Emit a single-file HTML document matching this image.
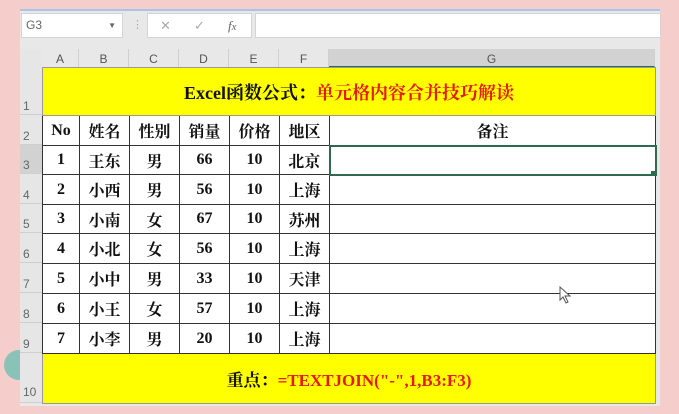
<!DOCTYPE html><html><head><meta charset="utf-8"><style>
body{margin:0;width:679px;height:414px;background:#f5cdca;position:relative;overflow:hidden;font-family:"Liberation Sans",sans-serif}
.win{position:absolute;left:20px;top:9px;width:640px;height:395px;background:#e8e8e8;border-top:2px solid #a9c4e8}
.a{position:absolute}
.box{background:#fff;border:1px solid #d4d4d4}
.ch{position:absolute;top:49px;height:18px;font-size:12px;color:#555;text-align:center;line-height:20px;border-right:1px solid #cfcfcf}
.rh{position:absolute;left:20px;width:22px;font-size:12px;color:#666;background:#e6e6e6;border-bottom:1px solid #cfcfcf;box-sizing:border-box;padding-left:3px}
table{position:absolute;left:42px;top:67px;border-collapse:collapse;table-layout:fixed;font-family:"Liberation Serif","Noto Serif CJK SC",serif;font-weight:bold;font-size:16px;color:#111}
td{border:1px solid #333;text-align:center;padding:0;background:#fff}
.y td{background:#ff0;border-color:#999}
.r{color:#e41b0b}
</style></head><body>
<div class="a" style="left:4px;top:350px;width:30px;height:30px;border-radius:50%;background:#5bbfb0;opacity:.7"></div>
<div class="win"></div>
<div class="a box" style="left:21px;top:13px;width:96px;height:23px;font-size:12px;color:#666;line-height:23px;padding-left:4px">G3<span style="position:absolute;right:6px;font-size:8px">▼</span></div>
<div class="a" style="left:132px;top:18px;color:#aaa;font-size:11px">⋮</div>
<div class="a box" style="left:147px;top:13px;width:103px;height:23px;color:#aaa;font-size:13px;line-height:23px"><span style="position:absolute;left:12px">✕</span><span style="position:absolute;left:46px">✓</span><span style="position:absolute;left:80px;font-family:'Liberation Serif';font-style:italic;color:#666">f<small>x</small></span></div>
<div class="a box" style="left:255px;top:13px;width:404px;height:23px"></div>
<div class="a" style="left:20px;top:49px;width:22px;height:18px;background:#e6e6e6"></div>
<div class="ch" style="left:42px;width:36px">A</div>
<div class="ch" style="left:79px;width:49px">B</div>
<div class="ch" style="left:129px;width:49px">C</div>
<div class="ch" style="left:179px;width:49px">D</div>
<div class="ch" style="left:229px;width:49px">E</div>
<div class="ch" style="left:279px;width:49px">F</div>
<div class="ch" style="left:329px;width:325px;background:#d2d2d2;border-bottom:1px solid #2e6b4e;height:17px">G</div>
<div class="rh" style="top:67px;height:48px;padding-top:32px">1</div>
<div class="rh" style="top:115px;height:30px;padding-top:14px">2</div>
<div class="rh" style="top:145px;height:29px;padding-top:13px;background:#d2d2d2">3</div>
<div class="rh" style="top:174px;height:30px;padding-top:14px">4</div>
<div class="rh" style="top:204px;height:29px;padding-top:13px">5</div>
<div class="rh" style="top:233px;height:30px;padding-top:14px">6</div>
<div class="rh" style="top:263px;height:30px;padding-top:14px">7</div>
<div class="rh" style="top:293px;height:30px;padding-top:14px">8</div>
<div class="rh" style="top:323px;height:30px;padding-top:14px">9</div>
<div class="rh" style="top:353px;height:50px;padding-top:32px">10</div>
<table>
<colgroup><col style="width:37px"><col style="width:50px"><col style="width:50px"><col style="width:50px"><col style="width:50px"><col style="width:50px"><col style="width:326px"></colgroup>
<tr class="y" style="height:48px"><td colspan="7" style="font-size:18px">Excel函数公式：<span class="r">单元格内容合并技巧解读</span></td></tr>
<tr style="height:30px"><td>No</td><td>姓名</td><td>性别</td><td>销量</td><td>价格</td><td>地区</td><td>备注</td></tr>
<tr style="height:29px"><td>1</td><td>王东</td><td>男</td><td>66</td><td>10</td><td>北京</td><td style="border:2px solid #2e6b4e"></td></tr>
<tr style="height:30px"><td>2</td><td>小西</td><td>男</td><td>56</td><td>10</td><td>上海</td><td></td></tr>
<tr style="height:29px"><td>3</td><td>小南</td><td>女</td><td>67</td><td>10</td><td>苏州</td><td></td></tr>
<tr style="height:30px"><td>4</td><td>小北</td><td>女</td><td>56</td><td>10</td><td>上海</td><td></td></tr>
<tr style="height:30px"><td>5</td><td>小中</td><td>男</td><td>33</td><td>10</td><td>天津</td><td></td></tr>
<tr style="height:30px"><td>6</td><td>小王</td><td>女</td><td>57</td><td>10</td><td>上海</td><td></td></tr>
<tr style="height:30px"><td>7</td><td>小李</td><td>男</td><td>20</td><td>10</td><td>上海</td><td></td></tr>
<tr class="y" style="height:50px"><td colspan="7" style="font-size:17px">重点：<span class="r">=TEXTJOIN("-",1,B3:F3)</span></td></tr>
</table>
<div class="a" style="left:651px;top:171px;width:5px;height:5px;background:#2e6b4e"></div>
<svg class="a" style="left:559px;top:286px" width="14" height="18" viewBox="0 0 14 18"><path d="M1 1 L1 14 L4 11 L7 17 L9 16 L6 10 L11 10 Z" fill="#fff" stroke="#555" stroke-width="1"/></svg>
</body></html>
